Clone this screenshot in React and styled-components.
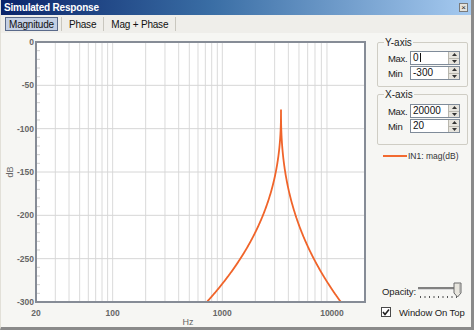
import React from "react";
import styled, { createGlobalStyle } from "styled-components";

const GlobalStyle = createGlobalStyle`
  html, body {
    margin: 0;
    padding: 0;
    background: #ffffff;
  }
  * {
    box-sizing: border-box;
  }
`;

const Window = styled.div`
  width: 474px;
  height: 330px;
  display: flex;
  flex-direction: column;
  background: #f6f6f3;
  border-left: 1px solid #e2e0d8;
  border-right: 3px solid #8a8a8a;
  border-bottom: 3px solid #8a8a8a;
  font-family: "Liberation Sans", Arial, sans-serif;
  overflow: hidden;
`;

const TitleBar = styled.div`
  height: 15px;
  flex: none;
  display: flex;
  align-items: center;
  justify-content: space-between;
  padding: 0 3px 0 3px;
  background: linear-gradient(to right, #0a246a 0%, #3a6ea5 45%, #a6caf0 100%);
`;

const Title = styled.span`
  color: #ffffff;
  font-size: 10px;
  font-weight: bold;
  letter-spacing: -0.2px;
`;

const CloseButton = styled.div`
  width: 9px;
  height: 9px;
  display: flex;
  align-items: center;
  justify-content: center;
  background: #e4e2dc;
  border: 1px solid #7a7a7a;
  font-size: 8px;
  line-height: 1;
  color: #222;
`;

const Toolbar = styled.div`
  height: 18px;
  flex: none;
  display: flex;
  align-items: center;
  padding: 0 4px;
  gap: 3px;
  background: #efeeea;
`;

const Tab = styled.div`
  height: 14px;
  display: flex;
  align-items: center;
  padding: 0 3px;
  font-size: 10px;
  letter-spacing: -0.2px;
  color: #111;
  background: ${(p) => (p.active ? "#c4d0e4" : "transparent")};
  border: 1px solid ${(p) => (p.active ? "#5a6a8a" : "transparent")};
`;

const Separator = styled.div`
  width: 1px;
  height: 14px;
  background: #c9c7bf;
`;

const Body = styled.div`
  flex: 1;
  display: flex;
  min-height: 0;
`;

const PlotPane = styled.div`
  width: 371px;
  flex: none;
`;

const SidePanel = styled.div`
  flex: 1;
  display: flex;
  flex-direction: column;
  padding: 4px 3px 0 5px;
  white-space: nowrap;
`;

const GroupBox = styled.fieldset`
  margin: ${(p) => p.$mt || 0}px 0 0 0;
  padding: ${(p) => p.$pt || 3}px 0 ${(p) => p.$pb || 6}px 10px;
  border: 1px solid #cfcdc4;
  border-radius: 2px;
  display: flex;
  flex-direction: column;
  gap: 1px;
`;

const GroupLegend = styled.legend`
  padding: 0 1px;
  margin-left: -4px;
  font-size: 10px;
  line-height: 11px;
  color: #222;
`;

const FieldRow = styled.div`
  height: 14px;
  display: flex;
  align-items: center;
`;

const FieldLabel = styled.span`
  width: 22px;
  font-size: 9.5px;
  letter-spacing: -0.3px;
  color: #222;
`;

const SpinBox = styled.div`
  width: 50px;
  height: 14px;
  display: flex;
  background: #ffffff;
  border: 1px solid #7f8b99;
`;

const SpinInput = styled.div`
  flex: 1;
  font-size: 10px;
  line-height: 12px;
  padding-left: 2px;
  color: #111;
`;

const Caret = styled.span`
  display: inline-block;
  width: 1px;
  height: 9px;
  margin-left: 1px;
  vertical-align: -1px;
  background: #111;
`;

const SpinButtons = styled.div`
  width: 11px;
  display: flex;
  flex-direction: column;
`;

const SpinButton = styled.div`
  flex: 1;
  display: flex;
  align-items: center;
  justify-content: center;
  background: #e6e4dd;
  border: 1px solid #b9b7ae;
  border-width: ${(p) => (p.down ? "0 0 0 1px" : "0 0 1px 1px")};
`;

const LegendRow = styled.div`
  margin-top: 6px;
  display: flex;
  align-items: center;
  height: 10px;
  padding-left: 6px;
`;

const LegendLine = styled.div`
  width: 24px;
  height: 2px;
  background: #f26a30;
`;

const LegendText = styled.span`
  font-size: 8.5px;
  color: #333;
  margin-left: 1px;
`;

const Spacer = styled.div`
  flex: 1;
`;

const OpacityRow = styled.div`
  display: flex;
  align-items: center;
  height: 18px;
  padding-left: 5px;
  gap: 1px;
`;

const SmallText = styled.span`
  font-size: 9.5px;
  letter-spacing: -0.1px;
  color: #222;
`;

const CheckRow = styled.div`
  display: flex;
  align-items: center;
  height: 12px;
  margin: 6px 0 9px 0;
  padding-left: 4px;
  gap: 8px;
`;

const CheckBox = styled.div`
  width: 10px;
  height: 10px;
  flex: none;
  border: 1px solid #4a4a4a;
  background: #ffffff;
  display: flex;
  align-items: center;
  justify-content: center;
`;

const Arrow = ({ down }) => (
  <svg width="5" height="3" viewBox="0 0 5 3">
    <path d={down ? "M0 0 L5 0 L2.5 3 Z" : "M0 3 L5 3 L2.5 0 Z"} fill="#333" />
  </svg>
);

const Spin = ({ value, caret }) => (
  <SpinBox>
    <SpinInput>
      {value}
      {caret && <Caret />}
    </SpinInput>
    <SpinButtons>
      <SpinButton>
        <Arrow />
      </SpinButton>
      <SpinButton down>
        <Arrow down />
      </SpinButton>
    </SpinButtons>
  </SpinBox>
);

// plot geometry, in pane coordinates (pane starts at page y=33)
const OY = 33;
const L = 35;
const R = 364;
const T = 42 - OY;
const B = 302 - OY;
const decade = (R - L) / 3;
const xOf = (f) => L + (Math.log10(f) - Math.log10(20)) * decade;
const yOf = (db) => T + (-db / 300) * (B - T);

const F0 = 3428;
const curvePoints = () => {
  const pts = [];
  const p = 0.424;
  for (let i = -200; i <= 200; i++) {
    const s = i / 200;
    const u = Math.sign(s) * s * s * (s < 0 ? 0.72 : 0.6);
    const db = u < 0 ? -78 - 262 * Math.pow(-u, p) : -78 - 287 * Math.pow(u, p);
    const f = F0 * Math.pow(10, u);
    pts.push(`${xOf(f).toFixed(2)},${yOf(db).toFixed(2)}`);
  }
  return pts.join(" ");
};

const labelFont = "Liberation Sans, Arial, sans-serif";

const Plot = () => {
  const vGrid = [];
  [20, 200, 2000].forEach((base) => {
    for (let k = 1; k <= 9; k++) {
      const f = (base / 20) * 10 * k;
      if (f > 20 && f < 20000) vGrid.push(f);
    }
  });
  const hGrid = [-50, -100, -150, -200, -250];
  const minor = [];
  for (let d = -10; d > -300; d -= 10) if (d % 50 !== 0) minor.push(d);
  const yLabels = [0, -50, -100, -150, -200, -250, -300];
  const xLabels = [20, 100, 1000, 10000];

  return (
    <svg width="371" height="294" viewBox="0 0 371 294">
      <defs>
        <clipPath id="plotclip">
          <rect x={L} y={T} width={R - L} height={B - T} />
        </clipPath>
      </defs>
      <rect x={L} y={T} width={R - L} height={B - T} fill="#ffffff" />
      {vGrid.map((f) => (
        <line key={f} x1={xOf(f)} x2={xOf(f)} y1={T} y2={B} stroke="#dadada" strokeWidth="1" />
      ))}
      {hGrid.map((d) => (
        <line key={d} x1={L} x2={R} y1={yOf(d)} y2={yOf(d)} stroke="#d6d6d6" strokeWidth="1" />
      ))}
      {minor.map((d) => (
        <line key={d} x1={L} x2={L + 4} y1={yOf(d)} y2={yOf(d)} stroke="#cfcfcf" strokeWidth="1" />
      ))}
      <polyline
        points={curvePoints()}
        fill="none"
        stroke="#f0642a"
        strokeWidth="1.8"
        clipPath="url(#plotclip)"
      />
      <rect x={L} y={T} width={R - L} height={B - T} fill="none" stroke="#868c96" strokeWidth="2" />
      {yLabels.map((d) => (
        <text
          key={d}
          x={33}
          y={yOf(d) + 3}
          textAnchor="end"
          fontFamily={labelFont}
          fontWeight="bold"
          fontSize="8.5"
          fill="#666"
        >
          {d}
        </text>
      ))}
      {xLabels.map((f) => (
        <text
          key={f}
          x={xOf(f)}
          y={313 - OY + 3}
          textAnchor="middle"
          fontFamily={labelFont}
          fontWeight="bold"
          fontSize="8.5"
          fill="#666"
        >
          {f}
        </text>
      ))}
      <text x={187} y={322 - OY + 3} textAnchor="middle" fontFamily={labelFont} fontSize="9" fill="#666">
        Hz
      </text>
      <text
        transform={`translate(12, ${172 - OY}) rotate(-90)`}
        textAnchor="middle"
        fontFamily={labelFont}
        fontSize="9"
        fill="#666"
      >
        dB
      </text>
    </svg>
  );
};

const Slider = () => (
  <svg width="46" height="18" viewBox="0 0 46 18">
    <line x1="1" y1="6" x2="39" y2="6" stroke="#5a5a5a" strokeWidth="1.5" />
    <line x1="1" y1="7.5" x2="39" y2="7.5" stroke="#d8d8d8" strokeWidth="1" />
    {[0, 1, 2, 3, 4, 5, 6, 7, 8].map((i) => (
      <rect key={i} x={3 + i * 4.5} y={14} width="1" height="2" fill="#555" />
    ))}
    <path d="M37 1 H44 V11 L40.5 15 L37 11 Z" fill="#e8e6de" stroke="#6a6a6a" strokeWidth="1" />
    <line x1="43" y1="2" x2="43" y2="11" stroke="#9a9a9a" strokeWidth="1" />
  </svg>
);

export default function App() {
  return (
    <>
      <GlobalStyle />
      <Window>
        <TitleBar>
          <Title>Simulated Response</Title>
          <CloseButton>×</CloseButton>
        </TitleBar>
        <Toolbar>
          <Tab active>Magnitude</Tab>
          <Separator />
          <Tab>Phase</Tab>
          <Separator />
          <Tab>Mag + Phase</Tab>
          <Separator />
        </Toolbar>
        <Body>
          <PlotPane>
            <Plot />
          </PlotPane>
          <SidePanel>
            <GroupBox>
              <GroupLegend>Y-axis</GroupLegend>
              <FieldRow>
                <FieldLabel>Max.</FieldLabel>
                <Spin value="0" caret />
              </FieldRow>
              <FieldRow>
                <FieldLabel>Min</FieldLabel>
                <Spin value="-300" />
              </FieldRow>
            </GroupBox>
            <GroupBox $mt={2} $pt={4} $pb={11}>
              <GroupLegend>X-axis</GroupLegend>
              <FieldRow>
                <FieldLabel>Max.</FieldLabel>
                <Spin value="20000" />
              </FieldRow>
              <FieldRow>
                <FieldLabel>Min</FieldLabel>
                <Spin value="20" />
              </FieldRow>
            </GroupBox>
            <LegendRow>
              <LegendLine />
              <LegendText>IN1: mag(dB)</LegendText>
            </LegendRow>
            <Spacer />
            <OpacityRow>
              <SmallText>Opacity:</SmallText>
              <Slider />
            </OpacityRow>
            <CheckRow>
              <CheckBox>
                <svg width="8" height="8" viewBox="0 0 8 8">
                  <path d="M1 4 L3 6.5 L7 1.5" fill="none" stroke="#222" strokeWidth="1.6" />
                </svg>
              </CheckBox>
              <SmallText>Window On Top</SmallText>
            </CheckRow>
          </SidePanel>
        </Body>
      </Window>
    </>
  );
}
